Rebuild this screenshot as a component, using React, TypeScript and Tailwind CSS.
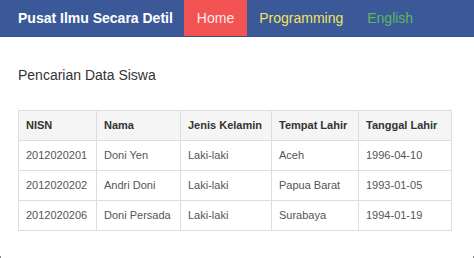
import React from 'react'

type Siswa = {
  nisn: string
  nama: string
  jk: string
  tempat: string
  tanggal: string
}

const rows: Siswa[] = [
  { nisn: '2012020201', nama: 'Doni Yen', jk: 'Laki-laki', tempat: 'Aceh', tanggal: '1996-04-10' },
  { nisn: '2012020202', nama: 'Andri Doni', jk: 'Laki-laki', tempat: 'Papua Barat', tanggal: '1993-01-05' },
  { nisn: '2012020206', nama: 'Doni Persada', jk: 'Laki-laki', tempat: 'Surabaya', tanggal: '1994-01-19' }
]

const headers = ['NISN', 'Nama', 'Jenis Kelamin', 'Tempat Lahir', 'Tanggal Lahir']
const widths = ['w-[78px]', 'w-[84px]', 'w-[91px]', 'w-[87px]', 'w-[93px]']

export default function App() {
  return (
    <div className="w-[474px] h-[258px] bg-white overflow-hidden font-['Liberation_Sans',Arial,sans-serif]">
      <nav className="h-[37px] bg-[#3b5998] border-b border-[#34508a] flex items-stretch pl-[18px]">
        <span className="flex items-center text-white font-bold text-[14px] pr-[11px]">
          Pusat Ilmu Secara Detil
        </span>
        <a className="flex items-center bg-[#f25454] text-[#fbeaea] text-[14px] px-[13px]">Home</a>
        <a className="flex items-center text-[#f2e35e] text-[14px] pl-[12px] pr-[12px]">Programming</a>
        <a className="flex items-center text-[#5cb85c] text-[14px] pl-[12px]">English</a>
      </nav>

      <div className="px-[18px]">
        <h4 className="mt-[30px] text-[14px] leading-[16px] text-[#333]">Pencarian Data Siswa</h4>

        <table className="mt-[27px] w-[434px] border-collapse border border-[#dddddd] text-[11px] table-fixed">
          <thead>
            <tr className="bg-[#f5f5f5] h-[30px]">
              {headers.map((h, i) => (
                <th
                  key={h}
                  className={`${widths[i]} border border-[#dddddd] px-[7px] text-left font-bold text-[#333]`}
                >
                  {h}
                </th>
              ))}
            </tr>
          </thead>
          <tbody>
            {rows.map(r => (
              <tr key={r.nisn} className="h-[30px] text-[#555]">
                <td className="border border-[#dddddd] px-[7px]">{r.nisn}</td>
                <td className="border border-[#dddddd] px-[7px]">{r.nama}</td>
                <td className="border border-[#dddddd] px-[7px]">{r.jk}</td>
                <td className="border border-[#dddddd] px-[7px]">{r.tempat}</td>
                <td className="border border-[#dddddd] px-[7px]">{r.tanggal}</td>
              </tr>
            ))}
          </tbody>
        </table>
      </div>

      <div className="mt-[25px] h-[3px] border-x border-[#888]" />
    </div>
  )
}
